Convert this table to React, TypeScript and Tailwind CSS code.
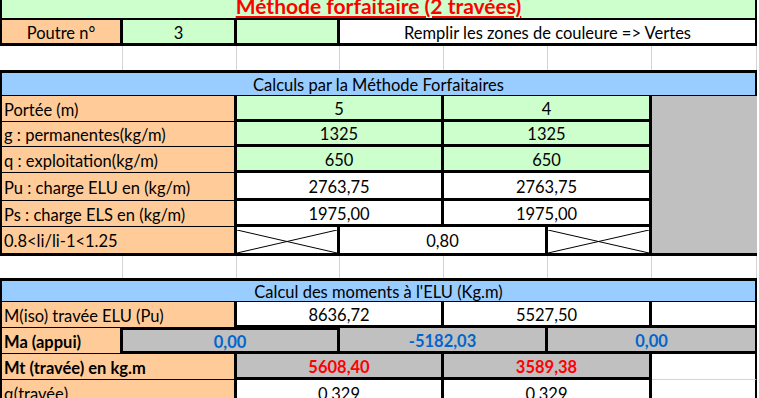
import React from 'react';
import clsx from 'clsx';

const Cell = ({ className, children }: { className?: string; children?: React.ReactNode }) => (
  <div className={clsx('flex items-center justify-center overflow-hidden whitespace-nowrap pt-[3px] border-black', className)}>
    {children}
  </div>
);

const Crossed = () => (
  <svg className="w-full h-full" viewBox="0 0 100 100" preserveAspectRatio="none">
    <line x1="0" y1="0" x2="100" y2="100" stroke="#000" strokeWidth="1" vectorEffect="non-scaling-stroke" />
    <line x1="0" y1="100" x2="100" y2="0" stroke="#000" strokeWidth="1" vectorEffect="non-scaling-stroke" />
  </svg>
);

const label = 'col-span-2 justify-start pl-[2px] bg-[#ffcc99] border-l-2 border-r-[3px] border-b';
const value = 'col-span-2 border-r-[3px] border-b-[3px]';
const blank = 'border-r border-r-[#d4d4d4]';

const App = () => {
  return (
    <div className="w-[759px] h-[398px] overflow-hidden bg-white text-[16.5px] text-black font-['Lato',sans-serif]">
      <div className="grid grid-cols-[123px_114px_103px_104px_104px_104px_105px] grid-rows-[20px_26px_24px_26px_26px_25px_26px_28px_26px_29px_22px_24px_26px_26px_26px_26px]">
        {/* titre */}
        <Cell className="col-span-7 items-start pt-0 bg-[#ccffcc] border-l-2 border-r-2 border-b-2">
          <span className="-mt-[8px] leading-none text-[21px] font-bold text-[#ff0000] underline decoration-2 underline-offset-[2px]">
            Méthode forfaitaire (2 travées)
          </span>
        </Cell>

        <Cell className="bg-[#ffcc99] border-l-2 border-r-[3px] border-b-[3px]">Poutre n°</Cell>
        <Cell className="bg-[#ccffcc] border-r-[3px] border-b-[3px]">3</Cell>
        <Cell className="bg-[#ccffcc] border-r-[3px] border-b-[3px]" />
        <Cell className="col-span-4 border-r-2 border-b-[3px]">Remplir les zones de couleure =&gt; Vertes</Cell>

        {[0, 1, 2, 3, 4, 5, 6].map((i) => (
          <Cell key={'a' + i} className={blank} />
        ))}

        {/* calculs */}
        <Cell className="col-span-7 bg-[#99ccff] border-t-[3px] border-l-2 border-r-2 border-b">
          Calculs par la Méthode Forfaitaires
        </Cell>

        <Cell className={label}>Portée (m)</Cell>
        <Cell className={clsx(value, 'bg-[#ccffcc]')}>5</Cell>
        <Cell className={clsx(value, 'bg-[#ccffcc]')}>4</Cell>
        <Cell className="row-span-6 bg-[#c0c0c0] border-b-[3px]" />

        <Cell className={label}>g : permanentes(kg/m)</Cell>
        <Cell className={clsx(value, 'relative bg-[#ccffcc]')}>
          1325
          <div className="absolute z-10 -left-[2px] -top-[2px] -right-[4px] -bottom-[3px] border-2 border-[#217346]">
            <div className="absolute -right-[5px] -bottom-[5px] w-[7px] h-[7px] bg-[#217346] border border-white" />
          </div>
        </Cell>
        <Cell className={clsx(value, 'bg-[#ccffcc]')}>1325</Cell>

        <Cell className={label}>q : exploitation(kg/m)</Cell>
        <Cell className={clsx(value, 'bg-[#ccffcc]')}>650</Cell>
        <Cell className={clsx(value, 'bg-[#ccffcc]')}>650</Cell>

        <Cell className={label}>Pu : charge ELU en (kg/m)</Cell>
        <Cell className={value}>2763,75</Cell>
        <Cell className={value}>2763,75</Cell>

        <Cell className={label}>Ps : charge ELS en (kg/m)</Cell>
        <Cell className={value}>1975,00</Cell>
        <Cell className={value}>1975,00</Cell>

        <Cell className={clsx(label, 'border-b-[3px]')}>0.8&lt;li/li-1&lt;1.25</Cell>
        <Cell className="pt-0 border-r-[3px] border-b-[3px]">
          <Crossed />
        </Cell>
        <Cell className={value}>0,80</Cell>
        <Cell className="pt-0 border-r-[3px] border-b-[3px]">
          <Crossed />
        </Cell>

        {[0, 1, 2, 3, 4, 5, 6].map((i) => (
          <Cell key={'b' + i} className={blank} />
        ))}

        {/* moments ELU */}
        <Cell className="col-span-7 bg-[#99ccff] border-t-[3px] border-l-2 border-r-2 border-b">
          Calcul des moments à l'ELU (Kg.m)
        </Cell>

        <Cell className={label}>M(iso) travée ELU (Pu)</Cell>
        <Cell className={value}>8636,72</Cell>
        <Cell className={value}>5527,50</Cell>
        <Cell className="border-r-2 border-b-[3px]" />

        <Cell className="justify-start pl-[2px] font-bold bg-[#ffcc99] border-l-2 border-r-[3px] border-b">Ma (appui)</Cell>
        <Cell className={clsx(value, 'border-t-2 bg-[#c0c0c0] font-bold text-[#0066cc]')}>0,00</Cell>
        <Cell className={clsx(value, 'bg-[#c0c0c0] font-bold text-[#0066cc]')}>-5182,03</Cell>
        <Cell className="col-span-2 border-r-2 border-b-[3px] bg-[#c0c0c0] font-bold text-[#0066cc]">0,00</Cell>

        <Cell className={clsx(label, 'font-bold')}>Mt (travée) en kg.m</Cell>
        <Cell className={clsx(value, 'bg-[#c0c0c0] font-bold text-[#ff0000]')}>5608,40</Cell>
        <Cell className={clsx(value, 'bg-[#c0c0c0] font-bold text-[#ff0000]')}>3589,38</Cell>
        <Cell className="border-r-2 border-b border-b-[#d4d4d4]" />

        <Cell className={clsx(label, 'border-b-0')}>α(travée)</Cell>
        <Cell className="col-span-2 border-r-[3px]">0,329</Cell>
        <Cell className="col-span-2 border-r-[3px]">0,329</Cell>
        <Cell className="border-r-2" />
      </div>
    </div>
  );
};

export default App;
